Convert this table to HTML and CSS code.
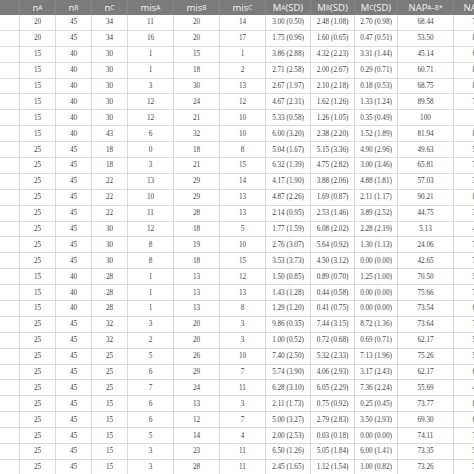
FILE: index.html
```html
<!DOCTYPE html>
<html>
<head>
<meta charset="utf-8">
<link rel="stylesheet" href="styles.css">
</head>
<body>
<div class="frame">
<div class="grid" id="grid">
<div class="h"></div>
<div class="h">n<sub>A</sub></div><div class="h">n<sub>B</sub></div><div class="h">n<sub>C</sub></div>
<div class="h">mis<sub>A</sub></div><div class="h">mis<sub>B</sub></div><div class="h">mis<sub>C</sub></div>
<div class="h">M<sub>A</sub> (SD)</div><div class="h">M<sub>B</sub> (SD)</div><div class="h">M<sub>C</sub> (SD)</div>
<div class="h">NAP<sub>A–B</sub><sup>*</sup></div><div class="h">NAP<sub>A–C</sub><sup>*</sup></div>
</div>
</div>
<script src="app.js"></script>
</body>
</html>
```

FILE: app.js
```js
var rows = [
["20","45","34","11","20","14","3.00 (0.50)","2.48 (1.08)","2.70 (0.98)","68.44","71.12"],
["20","45","34","16","20","17","1.75 (0.96)","1.60 (0.65)","0.47 (0.51)","53.50","81.62"],
["15","40","30","1","15","1","3.86 (2.88)","4.32 (2.23)","3.31 (1.44)","45.14","61.43"],
["15","40","30","1","18","2","2.71 (2.58)","2.00 (2.67)","0.29 (0.71)","60.71","85.71"],
["15","40","30","3","30","13","2.67 (1.97)","2.10 (2.18)","0.18 (0.53)","68.75","88.24"],
["15","40","30","12","24","12","4.67 (2.31)","1.62 (1.26)","1.33 (1.24)","89.58","77.78"],
["15","40","30","12","21","10","5.33 (0.58)","1.26 (1.05)","0.35 (0.49)","100","100"],
["15","40","43","6","32","10","6.00 (3.20)","2.38 (2.20)","1.52 (1.89)","81.94","89.63"],
["25","45","18","0","18","8","5.04 (1.67)","5.15 (3.36)","4.90 (2.96)","49.63","51.11"],
["25","45","18","3","21","15","6.32 (1.39)","4.75 (2.82)","3.00 (3.46)","65.81","74.65"],
["25","45","22","13","29","14","4.17 (1.90)","3.88 (2.06)","4.88 (1.81)","57.03","38.54"],
["25","45","22","10","29","13","4.87 (2.26)","1.69 (0.87)","2.11 (1.17)","90.21","88.67"],
["25","45","22","11","28","13","2.14 (0.95)","2.53 (1.46)","3.89 (2.52)","44.75","31.82"],
["25","45","30","12","18","5","1.77 (1.59)","6.08 (2.02)","2.28 (2.19)","5.13","43.85"],
["25","45","30","8","19","10","2.76 (3.07)","5.64 (0.92)","1.30 (1.13)","24.06","70.53"],
["25","45","30","8","18","15","3.53 (3.73)","4.50 (3.12)","0.00 (0.00)","42.65","70.59"],
["15","40","28","1","13","12","1.50 (0.85)","0.89 (0.70)","1.25 (1.00)","70.50","56.25"],
["15","40","28","1","13","13","1.43 (1.28)","0.44 (0.58)","0.00 (0.00)","75.66","78.57"],
["15","40","28","1","13","8","1.29 (1.20)","0.41 (0.75)","0.00 (0.00)","73.54","64.29"],
["25","45","32","3","20","3","9.86 (0.35)","7.44 (3.15)","8.72 (1.36)","73.64","71.43"],
["25","45","32","2","20","3","1.00 (0.52)","0.72 (0.68)","0.69 (0.71)","62.17","57.14"],
["25","45","25","5","26","10","7.40 (2.50)","5.32 (2.33)","7.13 (1.96)","75.26","52.00"],
["25","45","25","6","29","7","5.74 (3.90)","4.06 (2.93)","3.17 (2.43)","62.17","67.39"],
["25","45","25","7","24","11","6.28 (3.10)","6.05 (2.29)","7.36 (2.24)","55.69","45.45"],
["25","45","15","6","13","3","2.11 (1.73)","0.75 (0.92)","0.25 (0.45)","73.77","81.82"],
["25","45","15","6","12","7","5.00 (3.27)","2.79 (2.83)","3.50 (2.93)","69.30","61.11"],
["25","45","15","5","14","4","2.00 (2.53)","0.03 (0.18)","0.00 (0.00)","74.11","77.27"],
["25","45","15","3","23","11","6.50 (1.26)","5.05 (1.84)","6.00 (1.41)","73.35","55.00"],
["25","45","15","3","28","11","2.45 (1.65)","1.12 (1.54)","1.00 (0.82)","73.26","77.50"]
];
var grid = document.getElementById("grid");
rows.forEach(function (r) {
  var first = document.createElement("div");
  first.className = "c c-first";
  grid.appendChild(first);
  r.forEach(function (v) {
    var d = document.createElement("div");
    d.className = "c";
    d.textContent = v;
    grid.appendChild(d);
  });
});
```

FILE: styles.css
```css
html, body {
  margin: 0;
  padding: 0;
  background: #ffffff;
}

.frame {
  width: 474px;
  height: 474px;
  overflow: hidden;
}

.grid {
  display: grid;
  width: 507px;
  grid-template-columns: 19px 36px 36px 36px 46px 46px 46px 45px 44px 43px 56px 54px;
  grid-template-rows: 15px;
  grid-auto-rows: 15.9px;
}

.h {
  background: #7b7b7b;
  color: #f4f4f4;
  font-family: "Open Sans", "DejaVu Sans", sans-serif;
  font-size: 9.5px;
  line-height: 12px;
  display: flex;
  align-items: center;
  justify-content: center;
  white-space: nowrap;
  border-left: 1px solid #878787;
}

.h:first-child {
  border-left: none;
}

.h sub {
  font-size: 6.5px;
  vertical-align: -1px;
  line-height: 0;
}

.h sup {
  font-size: 6.5px;
  vertical-align: 3px;
  line-height: 0;
}

.c {
  font-family: "Liberation Serif", "Times New Roman", serif;
  font-size: 7.2px;
  line-height: 10px;
  color: #444444;
  display: flex;
  align-items: center;
  justify-content: center;
  white-space: nowrap;
  border-left: 1px solid #dadada;
  border-bottom: 1px solid #dadada;
}

.c-first {
  border-left: none;
}
```
